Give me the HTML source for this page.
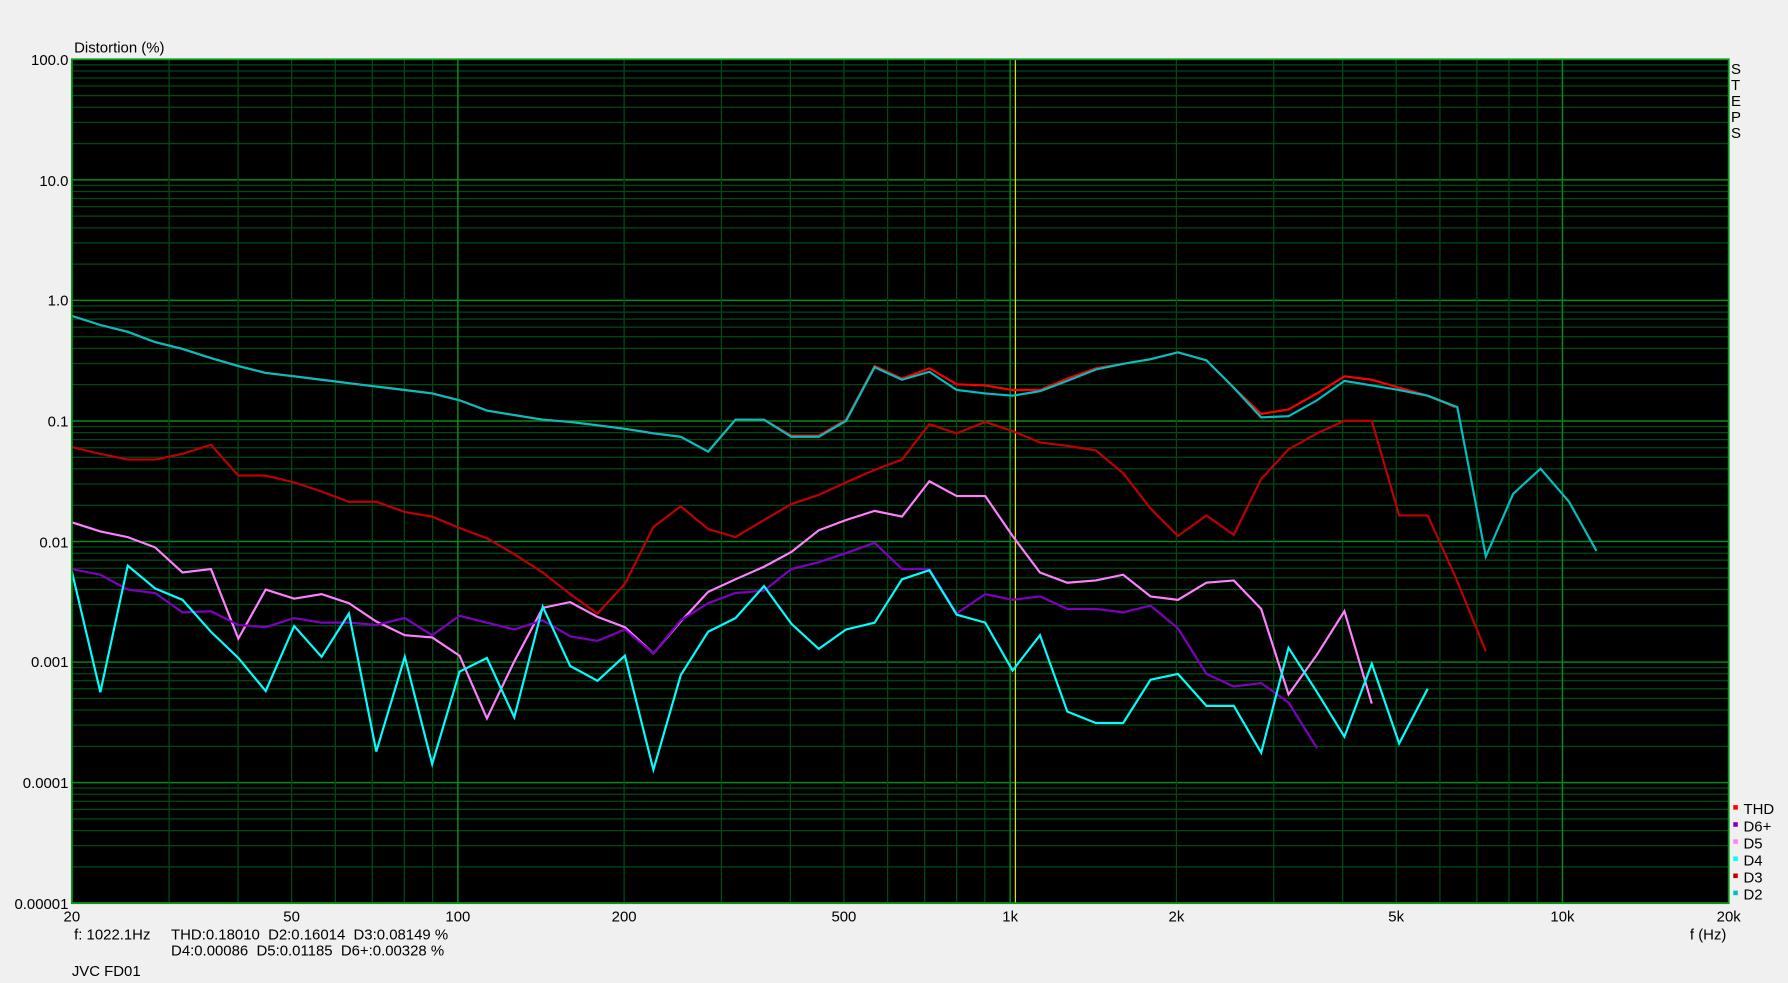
<!DOCTYPE html>
<html><head><meta charset="utf-8"><style>
html,body{margin:0;padding:0;background:#f0f0f0;overflow:hidden}
svg{display:block}
text{font-family:"Liberation Sans",Arial,sans-serif;font-size:13.1px;fill:#000;white-space:pre}
</style></head><body>
<svg id="s" width="1788" height="983" viewBox="0 0 1568 862" preserveAspectRatio="none" xmlns="http://www.w3.org/2000/svg">
<rect x="0" y="0" width="1568" height="862" fill="#f0f0f0"/>
<rect x="63" y="52" width="1453" height="740" fill="#000"/>
<g id="grid"></g>
<g id="traces" fill="none" stroke-width="1.9" stroke-linejoin="miter"></g>
<rect x="63" y="52" width="1453" height="740" fill="none" stroke="#0a9a1a" stroke-width="1.6"/>
<text x="65" y="46">Distortion (%)</text>
<g text-anchor="end">
<text x="60" y="57">100.0</text>
<text x="60" y="163">10.0</text>
<text x="60" y="268">1.0</text>
<text x="60" y="374">0.1</text>
<text x="60" y="480">0.01</text>
<text x="60" y="585">0.001</text>
<text x="60" y="691">0.0001</text>
<text x="60" y="797">0.00001</text>
</g>
<g text-anchor="middle" id="xl"></g>
<g style="font-size:14px">
<text x="1518" y="65">S</text><text x="1518" y="79">T</text><text x="1518" y="93">E</text><text x="1518" y="107">P</text><text x="1518" y="121">S</text>
</g>
<g>
<rect x="1520" y="706" width="4" height="4" fill="#ff0000"/><text x="1529" y="714">THD</text>
<rect x="1520" y="721" width="4" height="4" fill="#8000c0"/><text x="1529" y="729">D6+</text>
<rect x="1520" y="736" width="4" height="4" fill="#ff80ff"/><text x="1529" y="744">D5</text>
<rect x="1520" y="751" width="4" height="4" fill="#00ffff"/><text x="1529" y="759">D4</text>
<rect x="1520" y="766" width="4" height="4" fill="#c00000"/><text x="1529" y="774">D3</text>
<rect x="1520" y="781" width="4" height="4" fill="#00c0c0"/><text x="1529" y="789">D2</text>
</g>
<text x="1482" y="824">f (Hz)</text>
<text x="65" y="824">f: 1022.1Hz</text>
<text x="150" y="824" xml:space="preserve">THD:0.18010  D2:0.16014  D3:0.08149 %</text>
<text x="150" y="838" xml:space="preserve">D4:0.00086  D5:0.01185  D6+:0.00328 %</text>
<text x="63" y="856">JVC FD01</text>
</svg>
<script>
var NS="http://www.w3.org/2000/svg";
function X(f){return 63+Math.log10(f/20)/3*1453;}
function Y(v){return 52+(2-Math.log10(v))/7*740;}
var g=document.getElementById('grid');
function line(x1,y1,x2,y2,c,w){var l=document.createElementNS(NS,'line');l.setAttribute('x1',x1);l.setAttribute('y1',y1);l.setAttribute('x2',x2);l.setAttribute('y2',y2);l.setAttribute('stroke',c);l.setAttribute('stroke-width',w);g.appendChild(l);}
for(var d=-5;d<2;d++){for(var m=1;m<10;m++){var y=Y(m*Math.pow(10,d));line(63,y,1516,y,m==1?'#0a8a1a':'#004a14',m==1?1.3:1.1);}}
var fs=[20,30,40,50,60,70,80,90,100,200,300,400,500,600,700,800,900,1000,2000,3000,4000,5000,6000,7000,8000,9000,10000,20000];
fs.forEach(function(f){var dec=(f==100||f==1000||f==10000);var x=X(f);line(x,52,x,792,dec?'#0a8a1a':'#004a14',dec?1.3:1.1);});
line(X(1022.1),52,X(1022.1),792,'#e0e000',1.1);
var xl=document.getElementById('xl');
[[20,'20'],[50,'50'],[100,'100'],[200,'200'],[500,'500'],[1000,'1k'],[2000,'2k'],[5000,'5k'],[10000,'10k'],[20000,'20k']].forEach(function(a){var t=document.createElementNS(NS,'text');t.setAttribute('x',X(a[0]));t.setAttribute('y',808);t.textContent=a[1];xl.appendChild(t);});
var tr=document.getElementById('traces');
function P(c,s){var p=document.createElementNS(NS,'polyline');p.setAttribute('points',s);p.setAttribute('stroke',c);tr.appendChild(p);}
P('#ff0000',"63,277 88,285 112,291 136,300 160,306 185,314 209,321 233,327 258,330 282,333 306,336 330,339 355,342 379,345 403,351 427,360 451,364 476,368 500,370 524,373 548,376 573,380 597,383 621,396 645,368 670,368 694,382 718,382 742,368 767,321 791,332 815,323 839,337 864,338 888,342 912,342 936,332 961,323 985,319 1009,315 1033,309 1058,316 1082,340 1106,363 1130,359 1155,345 1179,330 1203,333 1227,340 1252,347 1276,357");
P('#c00000',"63,392 88,398 112,403 136,403 160,398 185,390 209,417 233,417 258,423 282,431 306,440 330,440 355,449 379,453 403,463 427,472 451,486 476,502 500,521 524,538 548,512 573,462 597,444 621,464 645,471 670,456 694,442 718,434 742,423 767,412 791,403 815,372 839,380 864,370 888,378 912,388 936,391 961,395 985,415 1009,446 1033,470 1058,452 1082,469 1106,420 1130,394 1155,380 1179,369 1203,369 1227,452 1252,452 1276,505 1303,571");
P('#00c0c0',"63,277 88,285 112,291 136,300 160,306 185,314 209,321 233,327 258,330 282,333 306,336 330,339 355,342 379,345 403,351 427,360 451,364 476,368 500,370 524,373 548,376 573,380 597,383 621,396 645,368 670,368 694,383 718,383 742,369 767,322 791,333 815,326 839,342 864,345 888,347 912,343 936,334 961,324 985,319 1009,315 1033,309 1058,316 1082,340 1106,366 1130,365 1155,351 1179,334 1203,338 1227,342 1252,347 1278,357 1303,488 1327,433 1351,411 1376,440 1400,483");
P('#ff80ff',"63,458 88,466 112,471 136,480 160,502 185,499 209,560 233,517 258,525 282,521 306,529 330,545 355,557 379,559 403,575 427,630 451,580 476,533 500,528 524,541 548,550 573,573 597,545 621,519 645,508 670,497 694,484 718,465 742,456 767,448 791,453 815,422 839,435 864,435 888,470 912,502 936,511 961,509 985,504 1009,523 1033,526 1058,511 1082,509 1106,534 1130,609 1155,574 1179,536 1203,617");
P('#8000c0',"63,499 88,504 112,517 136,520 160,537 185,536 209,548 233,550 258,542 282,546 306,546 330,548 355,542 379,557 403,540 427,546 451,552 476,544 500,558 524,562 548,552 573,573 597,544 621,529 645,520 670,518 694,499 718,493 742,485 767,476 791,499 815,499 839,538 864,521 888,526 912,523 936,534 961,534 985,537 1009,531 1033,551 1058,591 1082,602 1106,599 1130,616 1155,656");
P('#00ffff',"63,501 88,607 112,496 136,516 160,526 185,554 209,577 233,606 258,549 282,576 306,538 330,659 355,576 379,670 403,589 427,577 451,629 476,532 500,584 524,597 548,575 573,675 597,592 621,554 645,542 670,514 694,547 718,569 742,552 767,546 791,508 815,500 839,539 864,546 888,588 912,557 936,624 961,634 985,634 1009,596 1033,591 1058,619 1082,619 1106,660 1130,568 1155,607 1179,646 1203,582 1227,652 1252,604");
</script>
</body></html>
